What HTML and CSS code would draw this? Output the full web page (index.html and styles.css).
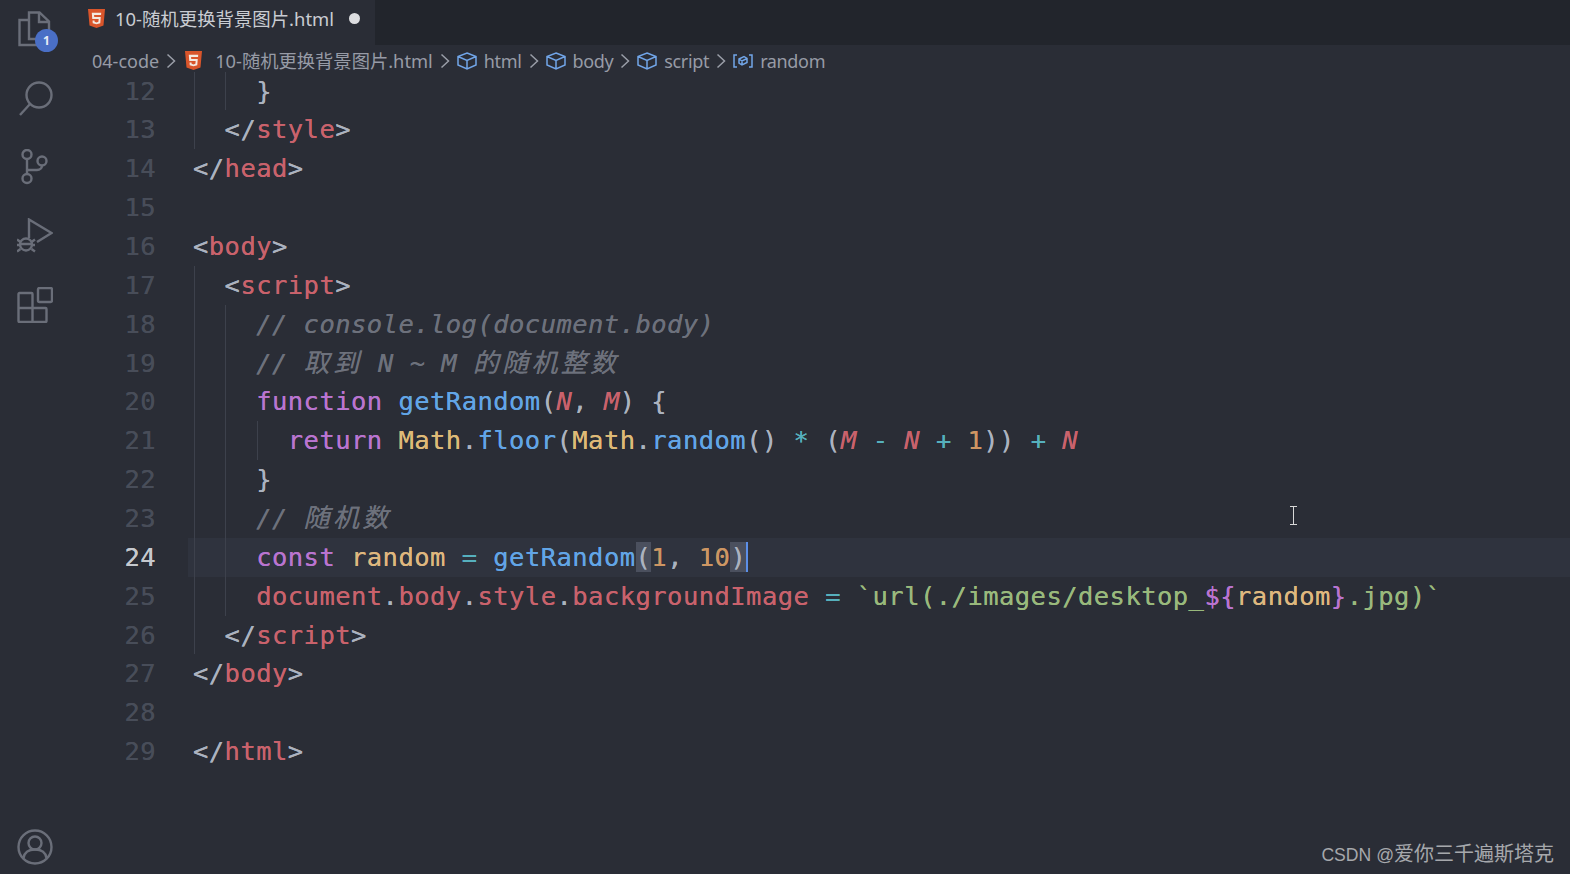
FILE: index.html
```html
<!DOCTYPE html>
<html lang="zh">
<head>
<meta charset="utf-8">
<title>10-随机更换背景图片.html</title>
<link rel="stylesheet" href="styles.css">
</head>
<body>
<div class="window">
  <nav class="activity">
    <div class="act-item">
      <svg class="act-icon" viewBox="0 0 36 36"><path d="M12 9V1.500h10.500L32 10.500V28H12V9zM22 2v9h10M12 9H2.500v25h20v-6"/></svg>
      <span class="badge">1</span>
    </div>
    <div class="act-item">
      <svg class="act-icon" viewBox="0 0 36 36"><circle cx="22" cy="15" r="12.500"/><path d="M13 24L3 35"/></svg>
    </div>
    <div class="act-item">
      <svg class="act-icon" viewBox="0 0 36 36"><circle cx="10" cy="5.500" r="4.500"/><circle cx="10" cy="29.500" r="4.500"/><circle cx="25" cy="12" r="4.500"/><path d="M10 10v15M10 21h10c3 0 5-2 5-4.500"/></svg>
    </div>
    <div class="act-item">
      <svg class="act-icon" viewBox="0 0 36 36"><path d="M12 20V1.500L34.500 15 20 24"/><circle cx="9" cy="26.500" r="6"/><path d="M3 26h12M0 21.500l3.500 2.500M18 21.500L14.500 24M0 27h3M15 27h3M0 33.500l3.500-2.500M18 33.500L14.500 31"/></svg>
    </div>
    <div class="act-item">
      <svg class="act-icon" viewBox="0 0 36 36"><rect x="21" y="1" width="14" height="14" rx="1.500"/><path d="M2.500 6h12a1 1 0 0 1 1 1v14h13a1 1 0 0 1 1 1v12a1 1 0 0 1-1 1h-26a1 1 0 0 1-1-1V7a1 1 0 0 1 1-1zM1.500 21h14M15.500 21v14"/></svg>
    </div>
    <div class="act-item act-bottom">
      <svg class="act-icon" viewBox="0 0 36 36"><circle cx="18" cy="18" r="16.500"/><circle cx="18" cy="14" r="6.500"/><path d="M6.500 29c1-6 6-8.500 11.500-8.500S28.500 23 29.500 29"/></svg>
    </div>
  </nav>
  <main class="main">
    <header class="tabbar">
      <div class="tab">
        <svg class="html5" viewBox="0 0 18 20"><path class="h5-bg" d="M0 0h18l-1.600 17.500L9 20l-7.400-2.500z"/><path class="h5-fg" d="M14 4H4l.5 6.500h6.800l-.3 3L9 14.200l-2-.7-.1-1.300H4.800l.2 2.800 4 1.200 4-1.200.5-6.500H6.600l-.2-2.300h7.400z"/></svg>
        <span class="tab-name">10-随机更换背景图片.html</span>
        <span class="dirty"></span>
      </div>
    </header>
    <div class="crumbs">
      <span class="crumb">04-code</span>
      <svg class="chev" viewBox="0 0 10 16"><path d="M1.500 1.500L8.500 8l-7 6.500"/></svg>
      <span class="crumb-group">
        <svg class="html5" viewBox="0 0 18 20"><path class="h5-bg" d="M0 0h18l-1.600 17.500L9 20l-7.400-2.500z"/><path class="h5-fg" d="M14 4H4l.5 6.500h6.800l-.3 3L9 14.200l-2-.7-.1-1.300H4.800l.2 2.800 4 1.200 4-1.200.5-6.500H6.600l-.2-2.300h7.400z"/></svg>
        <span class="crumb crumb-file">10-随机更换背景图片.html</span>
      </span>
      <svg class="chev" viewBox="0 0 10 16"><path d="M1.500 1.500L8.500 8l-7 6.500"/></svg>
      <svg class="sym" viewBox="0 0 20 18"><path d="M10 1l9 3.500v8.500l-9 4-9-4V4.500zM1 4.500l9 4 9-4M10 8.500V17"/></svg>
      <span class="crumb crumb-sym">html</span>
      <svg class="chev" viewBox="0 0 10 16"><path d="M1.500 1.500L8.500 8l-7 6.500"/></svg>
      <svg class="sym" viewBox="0 0 20 18"><path d="M10 1l9 3.500v8.500l-9 4-9-4V4.500zM1 4.500l9 4 9-4M10 8.500V17"/></svg>
      <span class="crumb crumb-sym">body</span>
      <svg class="chev" viewBox="0 0 10 16"><path d="M1.500 1.500L8.500 8l-7 6.500"/></svg>
      <svg class="sym" viewBox="0 0 20 18"><path d="M10 1l9 3.500v8.500l-9 4-9-4V4.500zM1 4.500l9 4 9-4M10 8.500V17"/></svg>
      <span class="crumb crumb-sym">script</span>
      <svg class="chev" viewBox="0 0 10 16"><path d="M1.500 1.500L8.500 8l-7 6.500"/></svg>
      <svg class="sym" viewBox="0 0 20 14"><path d="M4 1H1v12h3M16 1h3v12h-3M6 5l5-2.500 3 2v4l-5 2.500-3-2zM6 5l3 2 5-2.500M9 7v4"/></svg>
      <span class="crumb crumb-sym">random</span>
    </div>
    <section class="editor">
      <div class="line"><span class="num">12</span><span class="code"><i class="ind"></i><i class="ind"></i><span class="txt"><b class="p">}</b></span></span></div>
      <div class="line"><span class="num">13</span><span class="code"><i class="ind"></i><span class="txt"><b class="p">&lt;/</b><b class="t">style</b><b class="p">&gt;</b></span></span></div>
      <div class="line"><span class="num">14</span><span class="code"><span class="txt"><b class="p">&lt;/</b><b class="t">head</b><b class="p">&gt;</b></span></span></div>
      <div class="line"><span class="num">15</span><span class="code"></span></div>
      <div class="line"><span class="num">16</span><span class="code"><span class="txt"><b class="p">&lt;</b><b class="t">body</b><b class="p">&gt;</b></span></span></div>
      <div class="line"><span class="num">17</span><span class="code"><i class="ind"></i><span class="txt"><b class="p">&lt;</b><b class="t">script</b><b class="p">&gt;</b></span></span></div>
      <div class="line"><span class="num">18</span><span class="code"><i class="ind"></i><i class="ind"></i><span class="txt c">// console.log(document.body)</span></span></div>
      <div class="line"><span class="num">19</span><span class="code"><i class="ind"></i><i class="ind"></i><span class="txt c">// <em class="han">取到</em> N ~ M <em class="han">的随机整数</em></span></span></div>
      <div class="line"><span class="num">20</span><span class="code"><i class="ind"></i><i class="ind"></i><span class="txt"><b class="k">function</b> <b class="f">getRandom</b><b class="p">(</b><b class="v">N</b><b class="p">,</b> <b class="v">M</b><b class="p">) {</b></span></span></div>
      <div class="line"><span class="num">21</span><span class="code"><i class="ind"></i><i class="ind"></i><i class="ind"></i><span class="txt"><b class="k">return</b> <b class="y">Math</b><b class="p">.</b><b class="f">floor</b><b class="p">(</b><b class="y">Math</b><b class="p">.</b><b class="f">random</b><b class="p">()</b> <b class="o">*</b> <b class="p">(</b><b class="v">M</b> <b class="o">-</b> <b class="v">N</b> <b class="o">+</b> <b class="n">1</b><b class="p">))</b> <b class="o">+</b> <b class="v">N</b></span></span></div>
      <div class="line"><span class="num">22</span><span class="code"><i class="ind"></i><i class="ind"></i><span class="txt"><b class="p">}</b></span></span></div>
      <div class="line"><span class="num">23</span><span class="code"><i class="ind"></i><i class="ind"></i><span class="txt c">// <em class="han">随机数</em></span></span></div>
      <div class="line active"><span class="num">24</span><span class="code"><i class="ind"></i><i class="ind"></i><span class="txt"><b class="k">const</b> <b class="y2">random</b> <b class="o">=</b> <b class="f">getRandom</b><b class="p match">(</b><b class="n">1</b><b class="p">,</b> <b class="n">10</b><b class="p match caret">)</b></span></span></div>
      <div class="line"><span class="num">25</span><span class="code"><i class="ind"></i><i class="ind"></i><span class="txt"><b class="t">document</b><b class="p">.</b><b class="t">body</b><b class="p">.</b><b class="t">style</b><b class="p">.</b><b class="t">backgroundImage</b> <b class="o">=</b> <b class="s">`url(./images/desktop_</b><b class="k">${</b><b class="y2">random</b><b class="k">}</b><b class="s">.jpg)`</b></span></span></div>
      <div class="line"><span class="num">26</span><span class="code"><i class="ind"></i><span class="txt"><b class="p">&lt;/</b><b class="t">script</b><b class="p">&gt;</b></span></span></div>
      <div class="line"><span class="num">27</span><span class="code"><span class="txt"><b class="p">&lt;/</b><b class="t">body</b><b class="p">&gt;</b></span></span></div>
      <div class="line"><span class="num">28</span><span class="code"></span></div>
      <div class="line"><span class="num">29</span><span class="code"><span class="txt"><b class="p">&lt;/</b><b class="t">html</b><b class="p">&gt;</b></span></span></div>
    </section>
  </main>
  <svg class="ibeam" viewBox="0 0 9 19"><path d="M1 .5h7M4.500 .5v18M1 18.500h7"/></svg>
  <div class="mark"><span class="mark-lat">CSDN @</span>爱你三千遍斯塔克</div>
</div>
</body>
</html>
```
FILE: styles.css
```css
* { box-sizing: border-box; }
html, body { margin: 0; height: 100%; }
body { background: #2a2d36; overflow: hidden; }

.window {
  position: relative;
  display: flex;
  width: 1570px;
  height: 874px;
  background: #2a2d36;
  font-family: "Noto Sans", "Noto Sans CJK SC", sans-serif;
  overflow: hidden;
}

/* activity bar */
.activity {
  display: flex;
  flex-direction: column;
  flex: 0 0 70px;
  padding: 11px 0 9px 17px;
  gap: 33px;
}
.act-item { position: relative; width: 36px; height: 36px; }
.act-bottom { margin-top: auto; }
.act-icon {
  display: block;
  width: 36px;
  height: 36px;
  fill: none;
  stroke: #6a6e79;
  stroke-width: 2.4;
}
.badge {
  position: absolute;
  right: -5px;
  bottom: -5px;
  width: 23px;
  height: 23px;
  border-radius: 50%;
  background: #4a6fc6;
  color: #e8ecf5;
  font: 700 12px/23px "Noto Sans", sans-serif;
  text-align: center;
}

/* main column */
.main { flex: 1; display: flex; flex-direction: column; min-width: 0; }

.tabbar { flex: 0 0 45px; background: #22252c; display: flex; }
.tab {
  width: 305px;
  background: #2a2d36;
  display: flex;
  align-items: center;
  padding-left: 18px;
  padding-bottom: 9px;
}
.html5 { flex: none; width: 17px; height: 19px; }
.h5-bg { fill: #d9552b; }
.h5-fg { fill: #f3e9e0; }
.tab-name { margin-left: 10px; font-size: 18.4px; color: #c9ccd2; white-space: nowrap; }
.dirty {
  margin-left: 15px;
  width: 11px;
  height: 11px;
  border-radius: 50%;
  background: #dcdde0;
}

/* breadcrumb */
.crumbs {
  flex: 0 0 26.5px;
  height: 26.5px;
  padding: 5px 0 0 22px;
  display: flex;
  align-items: center;
  gap: 7px;
  position: relative;
  z-index: 1;
}
.crumb { font-size: 18px; line-height: 22px; color: #979ba6; white-space: nowrap; }
.crumb-file { font-size: 18.3px; }
.crumb-sym { letter-spacing: -0.35px; }
.crumb-group { display: flex; align-items: center; gap: 13px; margin-left: 2px; }
.chev { flex: none; width: 10px; height: 16px; fill: none; stroke: #9a9ea8; stroke-width: 1.5; }
.sym { flex: none; width: 20px; height: 18px; fill: none; stroke: #71a5e8; stroke-width: 1.5; }

/* editor */
.editor {
  flex: 1;
  font-family: "DejaVu Sans Mono", "Liberation Mono", "Noto Sans CJK SC", monospace;
  font-size: 25.5px;
  letter-spacing: 0.45px;
  text-shadow: 0 0 0.6px currentColor;
}
.line { display: flex; height: 38.87px; line-height: 38.87px; white-space: pre; }
.line.active { background: linear-gradient(90deg, transparent 118px, #2f333e 118px); }
.num {
  flex: 0 0 86px;
  text-align: right;
  color: #484d59;
}
.active .num { color: #c5c8ce; }
.code { display: flex; margin-left: 37.5px; flex: 1; min-width: 0; }
.ind { flex: 0 0 31.6px; border-left: 1px solid #3d414c; }
.txt { display: block; margin-left: -0.5px; }
b { font-weight: 400; }
.p { color: #abb2bf; }
.t { color: #c9626c; }
.k { color: #b974d0; }
.f { color: #62a5e6; }
.v { color: #c9626c; font-style: italic; }
.y { color: #dfba77; }
.y2 { color: #dfb77e; }
.n { color: #cd9663; }
.o { color: #56b0bd; }
.s { color: #99b97c; }
.c { color: #6d717c; font-style: italic; }
.han {
  font-family: "Noto Sans CJK SC", sans-serif;
  font-size: 26px;
  font-style: italic;
  letter-spacing: 3.3px;
  line-height: 1;
}
.match { background: #4b505e; }
.caret { box-shadow: 2px 0 0 #5c8fe8; }

/* overlays */
.ibeam {
  position: absolute;
  left: 1289px;
  top: 506px;
  width: 9px;
  height: 19px;
  fill: none;
  stroke: #d8d8d8;
  stroke-width: 1;
}
.mark {
  position: absolute;
  right: 16px;
  bottom: 5px;
  font: 20px/28px "Liberation Sans", "Noto Sans CJK SC", sans-serif;
  color: #a6a8ac;
  white-space: nowrap;
}
.mark-lat { font-size: 17.6px; }
```
